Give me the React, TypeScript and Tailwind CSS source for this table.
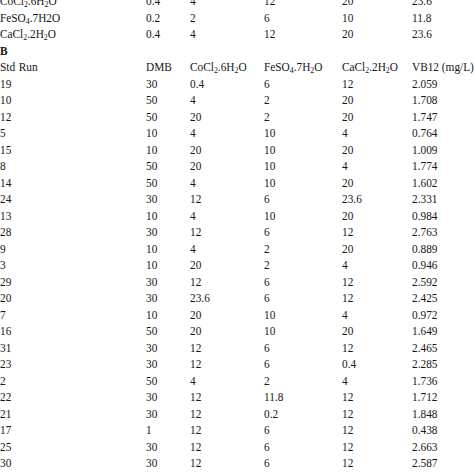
import React from "react";

const S = ({ children }: { children: React.ReactNode }) => <sub className="text-[9px]">{children}</sub>;

const Co = () => (<>CoCl<S>2</S>.6H<S>2</S>O</>);
const Fe = () => (<>FeSO<S>4</S>.7H<S>2</S>O</>);
const Ca = () => (<>CaCl<S>2</S>.2H<S>2</S>O</>);

type Cell = React.ReactNode;

const Row = ({ cells }: { cells: Cell[] }) => (
  <div className="grid grid-cols-[146px_44px_74px_78px_70px_1fr] h-[16.5px] leading-[16.5px] whitespace-nowrap">
    {cells.map((c, i) => (
      <div key={i}>
        <span className="inline-block origin-left scale-x-[0.87]">{c}</span>
      </div>
    ))}
  </div>
);

const data: string[][] = [
  ["19", "30", "0.4", "6", "12", "2.059"],
  ["10", "50", "4", "2", "20", "1.708"],
  ["12", "50", "20", "2", "20", "1.747"],
  ["5", "10", "4", "10", "4", "0.764"],
  ["15", "10", "20", "10", "20", "1.009"],
  ["8", "50", "20", "10", "4", "1.774"],
  ["14", "50", "4", "10", "20", "1.602"],
  ["24", "30", "12", "6", "23.6", "2.331"],
  ["13", "10", "4", "10", "20", "0.984"],
  ["28", "30", "12", "6", "12", "2.763"],
  ["9", "10", "4", "2", "20", "0.889"],
  ["3", "10", "20", "2", "4", "0.946"],
  ["29", "30", "12", "6", "12", "2.592"],
  ["20", "30", "23.6", "6", "12", "2.425"],
  ["7", "10", "20", "10", "4", "0.972"],
  ["16", "50", "20", "10", "20", "1.649"],
  ["31", "30", "12", "6", "12", "2.465"],
  ["23", "30", "12", "6", "0.4", "2.285"],
  ["2", "50", "4", "2", "4", "1.736"],
  ["22", "30", "12", "11.8", "12", "1.712"],
  ["21", "30", "12", "0.2", "12", "1.848"],
  ["17", "1", "12", "6", "12", "0.438"],
  ["25", "30", "12", "6", "12", "2.663"],
  ["30", "30", "12", "6", "12", "2.587"],
];

export default function App() {
  return (
    <div className="w-[474px] h-[474px] overflow-hidden bg-white text-[#161616] text-[13px] font-['Liberation_Serif','Times_New_Roman',serif]">
      <div className="-mt-[7px]">
        <Row cells={[<Co />, "0.4", "4", "12", "20", "23.6"]} />
        <Row cells={[<>FeSO<S>4</S>.7H2O</>, "0.2", "2", "6", "10", "11.8"]} />
        <Row cells={[<Ca />, "0.4", "4", "12", "20", "23.6"]} />
        <Row cells={[<span className="font-bold">B</span>, "", "", "", "", ""]} />
        <Row cells={[<span className="[word-spacing:1px]">Std Run</span>, "DMB", <Co />, <Fe />, <Ca />, "VB12 (mg/L)"]} />
        {data.map((r, i) => (
          <Row key={i} cells={r} />
        ))}
      </div>
    </div>
  );
}
